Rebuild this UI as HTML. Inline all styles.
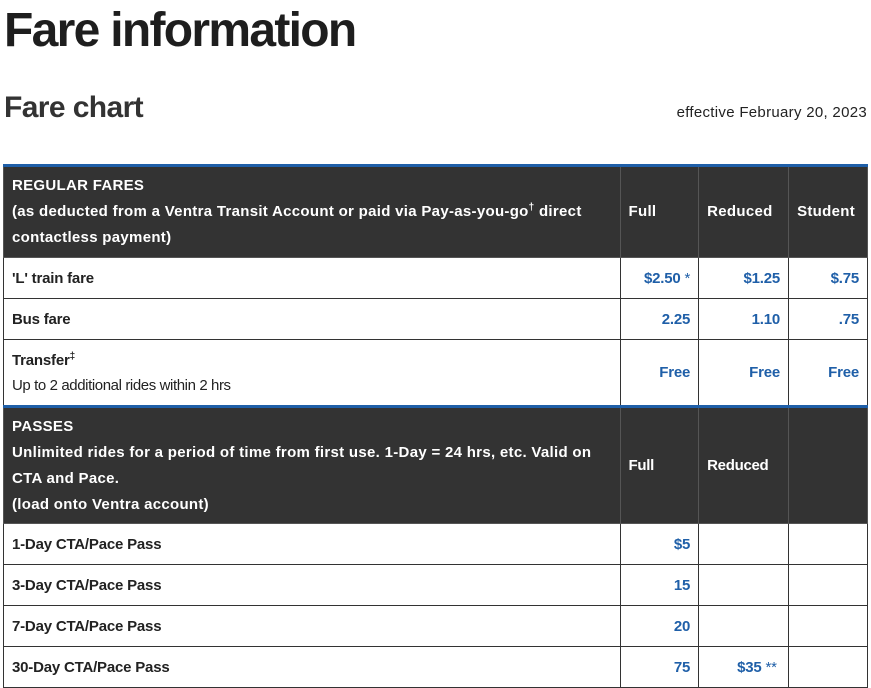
<!DOCTYPE html>
<html><head><meta charset="utf-8"><style>
body{margin:0;background:#fff;font-family:"Liberation Sans",Arial,sans-serif;color:#222;width:871px;height:688px;overflow:hidden;position:relative}
h1{position:absolute;left:4px;top:3px;margin:0;font-size:48px;font-weight:bold;letter-spacing:-1.7px;color:#1e1e1e;line-height:56px}
h2{position:absolute;left:4px;top:90px;margin:0;font-size:30px;font-weight:bold;letter-spacing:-0.6px;color:#333;line-height:36px}
.eff{position:absolute;right:4px;top:104px;font-size:15px;letter-spacing:0.3px;color:#222}
table{position:absolute;left:3px;top:164px;width:865px;border-collapse:collapse;font-size:15px;letter-spacing:-0.2px}
td,th{border:1px solid #333;padding:0 8px;font-weight:bold;vertical-align:middle;white-space:nowrap}
th{background:#333;color:#fff;text-align:left;border-color:#555;line-height:26px;letter-spacing:0.3px}
tr.hd th{border-top:3px solid #1f5fa8}
td.n{text-align:right;color:#1f5fa8}
td{height:40px}
.sm{font-weight:normal}
</style></head><body>
<h1>Fare information</h1>
<h2>Fare chart</h2>
<div class="eff">effective February 20, 2023</div>
<table>
<colgroup><col style="width:617px"><col style="width:79px"><col style="width:90px"><col style="width:79px"></colgroup>
<tr class="hd"><th style="height:90px">REGULAR FARES<br>(as deducted from a Ventra Transit Account or paid via Pay-as-you-go<sup style="font-size:10px;line-height:0">†</sup> direct<br>contactless payment)</th><th>Full</th><th>Reduced</th><th>Student</th></tr>
<tr><td>'L' train fare</td><td class="n">$2.50 <span class="sm">*</span></td><td class="n">$1.25</td><td class="n">$.75</td></tr>
<tr><td>Bus fare</td><td class="n">2.25</td><td class="n">1.10</td><td class="n">.75</td></tr>
<tr><td style="height:65px;line-height:25px">Transfer<sup style="font-size:10px;line-height:0">‡</sup><br><span class="sm" style="font-size:15px;letter-spacing:-0.4px">Up to 2 additional rides within 2 hrs</span></td><td class="n">Free</td><td class="n">Free</td><td class="n">Free</td></tr>
<tr class="hd"><th style="height:115px">PASSES<br>Unlimited rides for a period of time from first use. 1-Day = 24 hrs, etc. Valid on<br>CTA and Pace.<br>(load onto Ventra account)</th><th style="letter-spacing:-0.3px">Full</th><th style="letter-spacing:-0.3px">Reduced</th><th></th></tr>
<tr><td>1-Day CTA/Pace Pass</td><td class="n">$5</td><td></td><td></td></tr>
<tr><td>3-Day CTA/Pace Pass</td><td class="n">15</td><td></td><td></td></tr>
<tr><td>7-Day CTA/Pace Pass</td><td class="n">20</td><td></td><td></td></tr>
<tr><td>30-Day CTA/Pace Pass</td><td class="n">75</td><td class="n" style="text-align:left;padding-left:38px">$35 <span class="sm">**</span></td><td></td></tr>
</table>
</body></html>
